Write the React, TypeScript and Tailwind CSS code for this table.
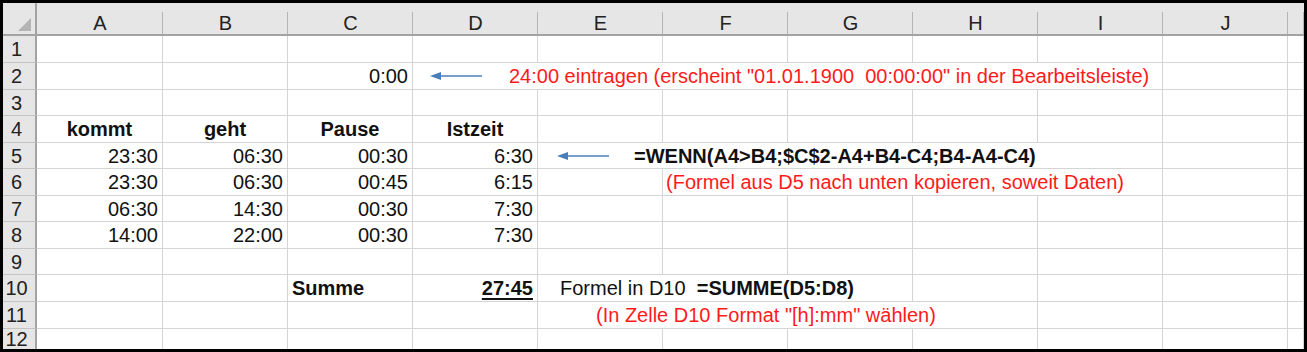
import React from 'react';

type CellDef = {
  span?: number;
  content?: React.ReactNode;
  className?: string;
};

const spanClass: Record<number, string> = {
  1: 'col-span-1',
  2: 'col-span-2',
  3: 'col-span-3',
  4: 'col-span-4',
  5: 'col-span-5',
  6: 'col-span-6',
};

const COLS = ['A', 'B', 'C', 'D', 'E', 'F', 'G', 'H', 'I', 'J'];

// blue pointer arrow drawn in the sheet
const Arrow: React.FC = () => (
  <svg width="52" height="12" viewBox="0 0 52 12" className="shrink-0">
    <line x1="9" y1="6" x2="52" y2="6" stroke="#4a7ebb" strokeWidth="1.6" />
    <polygon points="0,6 11,2 11,10" fill="#4a7ebb" />
  </svg>
);

const empty = (n: number): CellDef[] => Array.from({ length: n }, () => ({}));

const right = 'justify-end pr-[4px]';
const head = 'justify-center font-bold';

const rows: CellDef[][] = [
  // 1
  empty(11),
  // 2
  [
    {},
    {},
    { content: '0:00', className: right },
    {
      span: 6,
      content: (
        <>
          <span className="ml-[17px]">
            <Arrow />
          </span>
          <span className="ml-[27px] whitespace-pre text-[#ff1a1a]">
            24:00 eintragen (erscheint "01.01.1900  00:00:00" in der Bearbeitsleiste)
          </span>
        </>
      ),
    },
    {},
    {},
  ],
  // 3
  empty(11),
  // 4
  [
    { content: 'kommt', className: head },
    { content: 'geht', className: head },
    { content: 'Pause', className: head },
    { content: 'Istzeit', className: head },
    ...empty(7),
  ],
  // 5
  [
    { content: '23:30', className: right },
    { content: '06:30', className: right },
    { content: '00:30', className: right },
    { content: '6:30', className: right },
    {
      span: 5,
      content: (
        <>
          <span className="ml-[19px]">
            <Arrow />
          </span>
          <span className="ml-[25px] whitespace-pre font-bold">=WENN(A4&gt;B4;$C$2-A4+B4-C4;B4-A4-C4)</span>
        </>
      ),
    },
    {},
    {},
  ],
  // 6
  [
    { content: '23:30', className: right },
    { content: '06:30', className: right },
    { content: '00:45', className: right },
    { content: '6:15', className: right },
    {},
    {
      span: 4,
      content: (
        <span className="pl-[3px] whitespace-pre text-[#ff1a1a]">
          (Formel aus D5 nach unten kopieren, soweit Daten)
        </span>
      ),
    },
    {},
    {},
  ],
  // 7
  [
    { content: '06:30', className: right },
    { content: '14:30', className: right },
    { content: '00:30', className: right },
    { content: '7:30', className: right },
    ...empty(7),
  ],
  // 8
  [
    { content: '14:00', className: right },
    { content: '22:00', className: right },
    { content: '00:30', className: right },
    { content: '7:30', className: right },
    ...empty(7),
  ],
  // 9
  empty(11),
  // 10
  [
    {},
    {},
    { content: 'Summe', className: 'pl-[4px] font-bold' },
    {
      content: <span className="underline decoration-[1.5px] underline-offset-[3px]">27:45</span>,
      className: `${right} font-bold`,
    },
    {
      span: 3,
      content: (
        <span className="pl-[22px] whitespace-pre">
          Formel in D10  <span className="font-bold">=SUMME(D5:D8)</span>
        </span>
      ),
    },
    {},
    {},
    {},
    {},
  ],
  // 11
  [
    {},
    {},
    {},
    {},
    {
      span: 4,
      content: (
        <span className="pl-[58px] whitespace-pre text-[#ff1a1a]">
          (In Zelle D10 Format "[h]:mm" wählen)
        </span>
      ),
    },
    {},
    {},
    {},
  ],
  // 12
  empty(11),
];

const App: React.FC = () => {
  return (
    <div className="w-[1307px] h-[352px] overflow-hidden bg-black p-[3px] font-['Liberation_Sans',Arial,sans-serif] text-[20px] leading-[20px] text-[#111]">
      <div className="grid h-full grid-cols-[34px_126px_repeat(9,125px)_1fr] grid-rows-[33px_27px_27px_26px_27px_26px_27px_26px_27px_26px_27px_27px_1fr] overflow-hidden bg-white">
        {/* corner */}
        <div className="relative border-b-2 border-r-2 border-[#a3a3a3] bg-[#e6e6e6]">
          <div className="absolute bottom-[3px] right-[4px] h-0 w-0 border-b-[13px] border-l-[13px] border-b-[#b4b4b4] border-l-transparent" />
        </div>
        {/* column headers */}
        {[...COLS, ''].map((c, i) => (
          <div
            key={`h${i}`}
            className="relative flex items-end justify-center border-b-2 border-[#a3a3a3] bg-[#e6e6e6] pb-[1px] text-[#222] after:absolute after:bottom-0 after:right-0 after:top-[9px] after:w-px after:bg-[#b4b4b4]"
          >
            {c}
          </div>
        ))}

        {rows.map((cells, r) => (
          <React.Fragment key={r}>
            <div className="flex items-center justify-center border-b border-r-2 border-b-[#c4c4c4] border-r-[#a3a3a3] bg-[#e6e6e6] pr-[5px] text-[#222]">
              {r + 1}
            </div>
            {cells.map((cell, i) => (
              <div
                key={i}
                className={`flex items-center overflow-visible border-b border-r border-[#d4d4d4] ${spanClass[cell.span ?? 1]} ${cell.className ?? ''}`}
              >
                {cell.content}
              </div>
            ))}
          </React.Fragment>
        ))}
      </div>
    </div>
  );
};

export default App;
